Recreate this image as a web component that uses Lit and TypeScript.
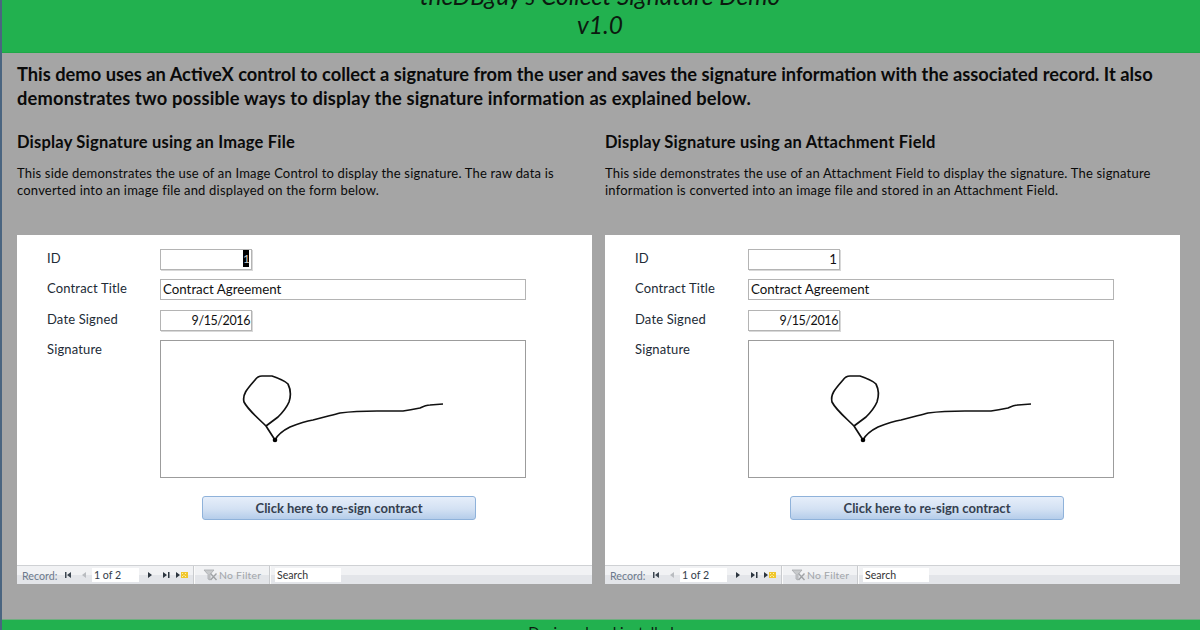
import { LitElement, html, css, svg } from "lit";
import { customElement, property } from "lit/decorators.js";

@customElement("access-form")
class AccessForm extends LitElement {
  @property({ type: Boolean }) selected = false;
  static styles = css`
    :host { display: flex; flex-direction: column; width: 575px; height: 349px; background: #fff; font-family: Lato, "Liberation Sans", sans-serif; }
    .form { flex: 1; padding: 14px 0 0 30px; box-sizing: border-box; }
    .grid { display: grid; grid-template-columns: 113px 366px; grid-template-rows: 30px 31px 30px 138px; }
    .label { font-size: 13px; letter-spacing: .15px; line-height: 18px; color: #222b36; }
    .field { box-sizing: border-box; height: 21px; border: 1px solid #b4b4b4; font-size: 13.3px; line-height: 19px; padding: 0 2px 0 2px; color: #111; background: #fff; white-space: nowrap; }
    .short { width: 92px; text-align: right; box-shadow: 1px 1px 0 #d8d8d8; }
    .date { font-size: 12.5px; letter-spacing: -.4px; padding-right: 1px; }
    .sel { background: #000; color: #ccc; display: inline-block; width: 6px; height: 17px; line-height: 17px; text-align: center; font-size: 12px; vertical-align: top; }
    .sig { border: 1px solid #9c9c9c; height: 138px; box-sizing: border-box; }
    .sig svg { display: block; }
    .btn { box-sizing: border-box; display: block; margin: 18px 0 0 155px; width: 274px; height: 24px; border: 1px solid #8fb2da; border-radius: 3px; background: linear-gradient(#e6eefa, #d3e1f3 55%, #b5cdea); font: 700 13px/22px Lato, "Liberation Sans", sans-serif; color: #35404f; text-align: center; }
    .nav { height: 19px; box-sizing: border-box; display: flex; align-items: center; background: linear-gradient(#f1f2f4 50%, #e3e5e9 50%); border-top: 1px solid #cfd1d4; font-size: 10.7px; color: #6c7a8c; padding-left: 5px; }
    .rec { width: 40px; white-space: nowrap; }
    .icon { display: block; flex: none; }
    .pos { box-sizing: border-box; width: 47px; height: 14px; background: #fff; color: #333d4a; font-size: 10.6px; line-height: 14px; padding-left: 2px; }
    .sep { width: 1px; height: 18px; background: #fbfbfb; border-left: 1px solid #c9cbce; }
    .sep.a { margin-right: 8px; }
    .sep.b { margin-right: 4px; }
    .nofilter { color: #a2a5a9; font-size: 10.4px; letter-spacing: .25px; width: 50px; margin-left: 1px; white-space: nowrap; }
    .search { box-sizing: border-box; width: 66px; height: 14px; background: #fff; color: #333; font-size: 10.6px; line-height: 14px; padding-left: 2px; }
  `;
  private nav() {
    return html`<div class="nav">
      <span class="rec">Record:</span>
      <svg class="icon" width="30" height="12" viewBox="0 0 30 12">
        <path d="M3 3v6h1.500V3zM9 3 5 6l4 3z" fill="#3c4650" />
        <path d="M24 3l-4 3 4 3z" fill="#b9bcc0" />
      </svg>
      <div class="pos">1 of 2</div>
      <svg class="icon" width="54" height="12" viewBox="0 0 54 12">
        <path d="M9 3l4 3-4 3zM24 3l4 3-4 3zM29 3h1.500v6H29zM37 3l4 3-4 3z" fill="#2d3640" />
        <path d="M42 3h7v6h-7z" fill="#f0c62e" />
        <path d="M43 4h1v1h-1zM46 4h1v1h-1zM44.500 6h1v1h-1zM43 7h1v1h-1zM46 7h1v1h-1z" fill="#fff3b0" />
      </svg>
      <span class="sep a"></span>
      <svg class="icon" width="15" height="14" viewBox="0 0 15 14">
        <path d="M1 2h10L7 6.500V12L5 11V6.500z" fill="#c8cacc" stroke="#a7aaad" stroke-width=".8" />
        <path d="M7.500 5.500l6 6.500M13.500 5.500l-6 6.500" stroke="#a0a3a6" stroke-width="1.400" />
      </svg>
      <span class="nofilter">No Filter</span>
      <span class="sep b"></span>
      <div class="search">Search</div>
    </div>`;
  }
  render() {
    const line1 = "M115 100 L106 86 C98 78 88 70 84 62 C82 54 88 48 95 40 C97 37 99 36 102 36 L112 36 C118 38 125 41 128 44 C131 50 131 56 129 62 C126 69 122 73 118 77 L106 86";
    const line2 = "M115 100 C118 94 124 90 130 87 C140 83 147 81 153 80 C165 77 172 75 180 73 C195 71 205 71 217 71 L243 71 C250 70 255 69 260 68 C264 66 267 65 270 65 L283 64";
    return html`<div class="form">
        <div class="grid">
          <div class="label">ID</div>
          <div class="field short">${this.selected ? html`<span class="sel">1</span>` : "1"}</div>
          <div class="label">Contract Title</div>
          <div class="field">Contract Agreement</div>
          <div class="label">Date Signed</div>
          <div class="field short date">9/15/2016</div>
          <div class="label">Signature</div>
          <div class="sig">
            <svg width="364" height="136" viewBox="1 1 364 136">
              ${svg`<path d=${line1} fill="none" stroke="#111" stroke-width="1.700" stroke-linejoin="round" />
              <path d=${line2} fill="none" stroke="#111" stroke-width="1.700" stroke-linejoin="round" />
              <circle cx="115" cy="100" r="2.300" fill="#000" />`}
            </svg>
          </div>
        </div>
        <div class="btn">Click here to re-sign contract</div>
      </div>
      ${this.nav()}`;
  }
}

@customElement("app-root")
class AppRoot extends LitElement {
  static styles = css`
    :host { display: flex; flex-direction: column; width: 1200px; height: 630px; overflow: hidden; box-sizing: border-box; background: #a5a5a5; border-left: 2px solid #4a6580; font-family: Lato, "Liberation Sans", sans-serif; color: #0a0a0a; }
    .head { flex: none; height: 53px; box-sizing: border-box; background: #22b14f; border-bottom: 1px solid #1fa848; display: flex; flex-direction: column; justify-content: flex-end; align-items: center; font-style: italic; font-size: 24.500px; line-height: 29px; padding: 0 2px 13px 0; color: #0c1a10; }
    .head div { white-space: nowrap; flex: none; }
    .main { flex: 1; min-height: 0; padding: 9px 0 0 15px; }
    .intro { font-weight: 700; font-size: 18.300px; line-height: 24px; width: 1160px; }
    .wide { letter-spacing: .17px; }
    .cols { display: grid; grid-template-columns: 575px 575px; column-gap: 13px; margin-top: 22px; }
    h2 { margin: 0; font-size: 16.500px; letter-spacing: .2px; line-height: 20px; font-weight: 700; }
    p { margin: 13px 0 0; font-size: 13px; letter-spacing: .19px; line-height: 17px; height: 70px; width: 560px; }
    .foot { flex: none; height: 11px; background: #22b14f; border-top: 1px solid #6fae80; box-sizing: border-box; text-align: center; font-size: 14.700px; line-height: 24px; overflow: visible; white-space: nowrap; color: #0c1a10; }
  `;
  render() {
    return html`<div class="head"><div>theDBguy's Collect Signature Demo</div><div>v1.0</div></div>
      <div class="main">
        <div class="intro">This demo uses an ActiveX control to collect a signature from the user and saves the signature information with the associated record. It also <span class="wide">demonstrates two possible ways to display the signature information as explained below.</span></div>
        <div class="cols">
          <div>
            <h2>Display Signature using an Image File</h2>
            <p>This side demonstrates the use of an Image Control to display the signature. The raw data is converted into an image file and displayed on the form below.</p>
            <access-form selected></access-form>
          </div>
          <div>
            <h2>Display Signature using an Attachment Field</h2>
            <p>This side demonstrates the use of an Attachment Field to display the signature. The signature information is converted into an image file and stored in an Attachment Field.</p>
            <access-form></access-form>
          </div>
        </div>
      </div>
      <div class="foot">Designed and installed</div>`;
  }
}
